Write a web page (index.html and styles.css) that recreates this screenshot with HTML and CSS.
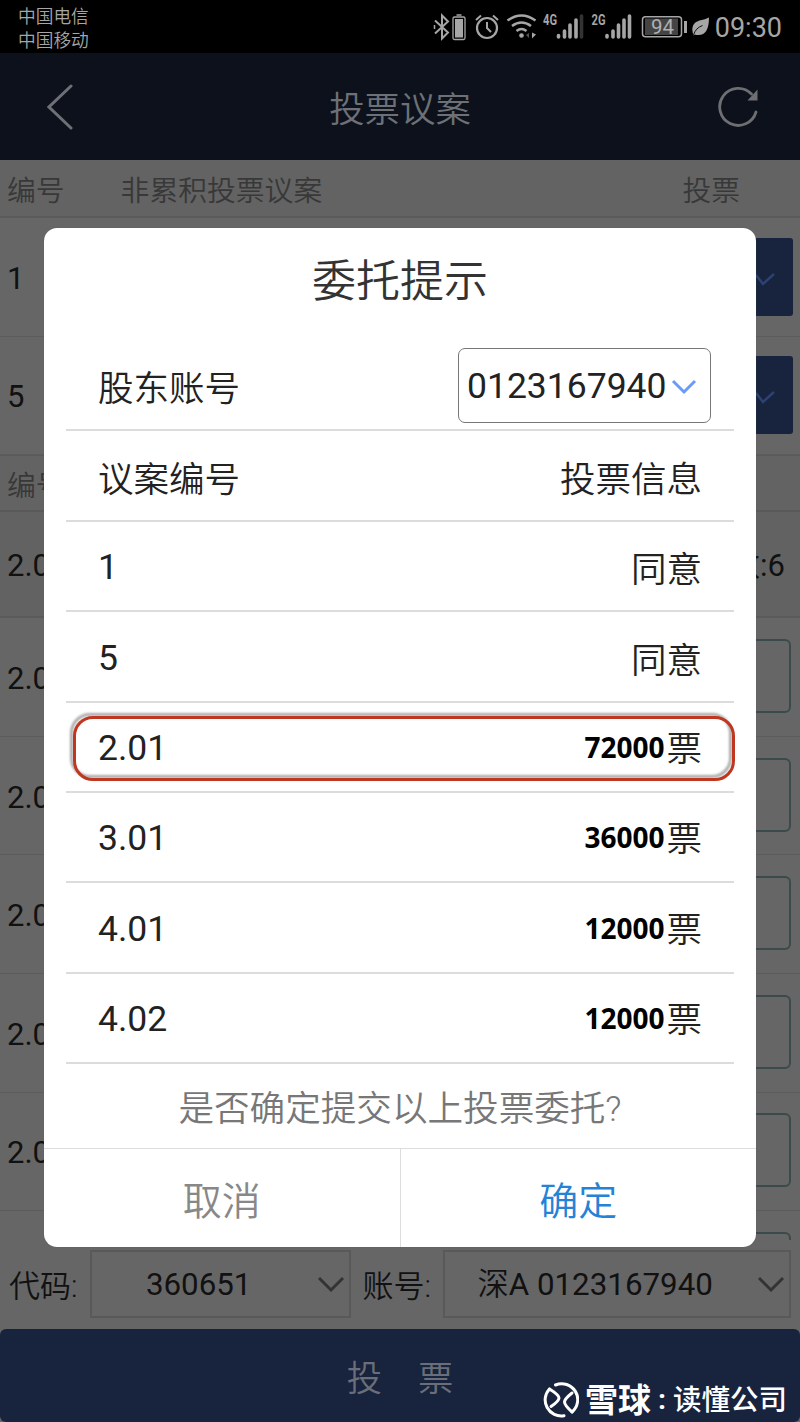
FILE: index.html
```html
<!DOCTYPE html>
<html lang="zh-CN">
<head>
  <meta charset="UTF-8">
  <meta name="viewport" content="width=device-width, initial-scale=1.0">
  <title>投票议案</title>
  <link rel="stylesheet" href="styles.css">
</head>
<body>
  <div class="page">
    <!-- status bar -->
    <div class="status-bar">
      <div class="carriers">
        <span>中国电信</span>
        <span>中国移动</span>
      </div>
      <svg class="status-icons" width="280" height="53" viewBox="0 0 280 53" fill="none" stroke="#a6a6a6" stroke-width="2">
        <!-- bluetooth + battery -->
        <path d="M16 20.500l13 12-6 6v-23l6 6-13 12"/>
        <path d="M15.500 25v4" stroke-width="1.500"/>
        <rect x="34" y="17" width="12" height="22.500" rx="1.500" stroke-width="1.300"/>
        <rect x="36" y="19" width="8" height="18.500" fill="#a6a6a6" stroke="none"/>
        <path d="M37.500 15h5" stroke-width="1.500"/>
        <!-- alarm -->
        <circle cx="68" cy="28" r="10" stroke-width="2.200"/>
        <path d="M68 22v6l4 4M57 20l5-4.500M79 20l-5-4.500" stroke-width="2"/>
        <!-- wifi -->
        <path d="M88.500 20.500q14-10 28 0M93 26q9.500-7 19 0M97.500 31q5-4 10 0" stroke-width="2.500"/>
        <circle cx="102.500" cy="35.500" r="2.300" fill="#a6a6a6" stroke="none"/>
        <path d="M110 33v5l-3-3z" fill="#555" stroke="none"/>
        <path d="M113 38.500v-6l4 2z" fill="#a6a6a6" stroke="none"/>
        <!-- mobile signals -->
        <text class="net" x="124" y="25" textLength="14" lengthAdjust="spacingAndGlyphs">4G</text>
        <g stroke-width="3.600" stroke-linecap="round">
          <path d="M139.500 35.500v1.500M145.500 31v6M151 25v12M157 20v17"/>
          <path d="M162.500 16v21" stroke="#333"/>
        </g>
        <text class="net" x="172.500" y="25" textLength="14" lengthAdjust="spacingAndGlyphs">2G</text>
        <path d="M188 35.500v1.500M194 31v6M199.500 25v12M205 20v17M210.500 16v21" stroke-width="3.600" stroke-linecap="round"/>
        <!-- battery level -->
        <rect x="223.500" y="16.800" width="39" height="20" rx="3" stroke-width="1.500"/>
        <rect x="226" y="18.500" width="33" height="16.500" fill="#444" stroke="none"/>
        <path d="M266.500 21v12" stroke-width="3"/>
        <text class="level" x="232" y="34" textLength="23">94</text>
        <!-- leaf -->
        <path d="M290 17.500q0 18-11 17.500-2 0-3-.5l-1.500 1q-4-12 6-15 6-1 9.500-3z" fill="#a6a6a6" stroke="none"/>
        <path d="M274.500 35q2-7 9-9.500" stroke="#000" stroke-width=".9"/>
      </svg>
      <span class="clock">09:30</span>
    </div>

    <div class="nav">
      <svg width="28" height="46" viewBox="0 0 28 46" fill="none" stroke="#6d7075" stroke-width="3" stroke-linecap="round">
        <path d="M24 2L2 23l22 21"/>
      </svg>
      <h1>投票议案</h1>
      <svg width="42" height="42" viewBox="0 0 42 42" fill="none" stroke="#6d6f72" stroke-width="2.800">
        <path d="M38 26a18.500 18.500 0 1 1-4.500-18" stroke-linecap="round"/>
        <path d="M39.500 3.500v11H29.500z" fill="#6d6f72" stroke="none"/>
      </svg>
    </div>

    <!-- proposals -->
    <div class="list">
      <div class="thead"><span class="col-no">编号</span><span class="col-name">非累积投票议案</span><span class="col-vote">投票</span></div>
      <div class="item">1<span class="choice"><svg width="20" height="14" viewBox="0 0 20 14"><path d="M1 2l7 9L19 1"/></svg></span></div>
      <div class="item">5<span class="choice"><svg width="20" height="14" viewBox="0 0 20 14"><path d="M1 2l7 9L19 1"/></svg></span></div>
      <div class="thead second"><span class="col-no">编号</span></div>
      <div class="group"><span>2.00</span><span>票数:6</span></div>
      <div class="item">2.01<span class="count"></span></div>
      <div class="item">2.02<span class="count"></span></div>
      <div class="item">2.03<span class="count"></span></div>
      <div class="item">2.04<span class="count"></span></div>
      <div class="item">2.05<span class="count"></span></div>
      <div class="item"><span class="count"></span></div>
    </div>

    <div class="account-bar">
      <span class="label">代码:</span>
      <div class="select code"><span class="num">360651</span><svg width="26" height="18" viewBox="0 0 26 18"><path d="M1 2l12 12L25 2"/></svg></div>
      <span class="label">账号:</span>
      <div class="select account"><span>深<span class="num">A 0123167940</span></span><svg width="26" height="18" viewBox="0 0 26 18"><path d="M1 2l12 12L25 2"/></svg></div>
    </div>
    <div class="vote-btn"><span>投</span><span>票</span></div>

    <!-- dialog -->
    <div class="dialog">
      <h2>委托提示</h2>
      <div class="rows">
        <div class="row first">
          <span class="cn">股东账号</span>
          <div class="holder num">0123167940<svg width="26" height="16" viewBox="0 0 26 16"><path d="M2 2l11 11L24 2"/></svg></div>
        </div>
        <div class="row"><span class="cn">议案编号</span><span class="cn">投票信息</span></div>
        <div class="row"><span class="num">1</span><span class="cn">同意</span></div>
        <div class="row"><span class="num">5</span><span class="cn">同意</span></div>
        <div class="row marked"><span class="num">2.01</span><span class="votes"><b>72000</b>票</span></div>
        <div class="row"><span class="num">3.01</span><span class="votes"><b>36000</b>票</span></div>
        <div class="row"><span class="num">4.01</span><span class="votes"><b>12000</b>票</span></div>
        <div class="row"><span class="num">4.02</span><span class="votes"><b>12000</b>票</span></div>
      </div>
      <p class="question">是否确定提交以上投票委托?</p>
      <div class="actions">
        <div class="cancel">取消</div>
        <div class="ok">确定</div>
      </div>
    </div>

    <!-- watermark -->
    <div class="watermark">
      <svg width="36" height="36" viewBox="0 0 36 36" fill="none" stroke="#fff" stroke-width="3" stroke-linecap="round">
        <path d="M12.500 3a16 16 0 0 1 16.500 27M21 33.700A16 16 0 0 1 6.500 7"/>
        <path d="M6.500 7q9.500 6 9.500 9T8 24.500M29 11q-7.500 6-7.500 9t7.500 10"/>
      </svg>
      <span class="brand">雪球</span><span class="colon">:</span><span class="author">读懂公司</span>
    </div>
  </div>
</body>
</html>
```
FILE: styles.css
```css
* {
  box-sizing: border-box;
}

body {
  margin: 0;
  font-family: Roboto, "Noto Sans CJK SC", sans-serif;
  line-height: 1;
  color: #111;
}

.page {
  position: relative;
  width: 800px;
  height: 1422px;
  overflow: hidden;
  background: #666;
  display: flex;
  flex-direction: column;
}

/* status bar */
.status-bar {
  flex: none;
  height: 53px;
  background: #000;
  color: #a6a6a6;
  display: flex;
  align-items: center;
  padding: 0 18px;
}

.carriers {
  display: flex;
  flex-direction: column;
  gap: 6px;
  width: 402px;
  padding-top: 7px;
  font-size: 17.700px;
  font-weight: 350;
}

.status-icons {
  overflow: visible;
  margin-left: 1px;
}

.net {
  font: 700 15px Roboto, sans-serif;
  fill: #a6a6a6;
  stroke: none;
}

.level {
  font: 20.500px Roboto, sans-serif;
  fill: #b0b0b0;
  stroke: none;
}

.clock {
  margin-left: 16px;
  font-size: 27px;
  padding-top: 4px;
}

/* title bar */
.nav {
  flex: none;
  height: 107px;
  background: #0c111c;
  display: flex;
  align-items: center;
  justify-content: space-between;
  padding: 0 40px 0 47px;
}

.nav h1 {
  margin: 0;
  padding: 8px 0 0 7px;
  font-size: 35.400px;
  font-weight: 350;
  color: #6d7075;
}

/* list */
.list {
  flex: none;
  height: 1080px;
  overflow: hidden;
}

.thead {
  height: 58px;
  display: flex;
  align-items: center;
  padding: 7px 60px 0 7px;
  background: #636363;
  border: 1px solid #5a5a5a;
  border-width: 0 0 2px;
  font-size: 28.800px;
  font-weight: 350;
  color: #383838;
}

.second {
  height: 57px;
  border-top-width: 1px;
}

.col-name {
  margin-left: 56px;
}

.col-vote {
  margin-left: auto;
}

.item {
  height: 118.600px;
  display: flex;
  align-items: center;
  justify-content: space-between;
  padding: 3px 7px 0;
  border-bottom: 1px solid #5c5c5c;
  font-size: 31px;
}

.choice {
  width: 150px;
  height: 78px;
  margin-top: -3px;
  border-radius: 3px;
  background: #18233d;
  display: flex;
  align-items: center;
  justify-content: flex-end;
  padding: 6px 18px 0 0;
}

.choice path {
  fill: none;
  stroke: #2c4273;
  stroke-width: 2.500;
}

.group {
  height: 106px;
  display: flex;
  align-items: center;
  justify-content: space-between;
  padding: 2px 15px 0 7px;
  background: #626262;
  border-bottom: 2px solid #5a5a5a;
  font-size: 31px;
}

.count {
  width: 150px;
  height: 74px;
  margin: -5px 2px 0 auto;
  border: 2px solid #3b4b4c;
  border-radius: 6px;
}

/* bottom */
.account-bar {
  flex: none;
  height: 89px;
  display: flex;
  align-items: center;
  padding: 0 9px 2px;
  font-size: 31.300px;
}

.label {
  width: 81px;
  padding-top: 5px;
  font-size: 31px;
  font-weight: 350;
}

.select {
  height: 68px;
  border: 2px solid #595959;
  display: flex;
  align-items: center;
  justify-content: space-between;
  padding: 3px 5px 0 0;
  font-weight: 350;
}

.num {
  font-weight: 400;
}

.select.code {
  width: 261px;
  padding-left: 54px;
  margin-right: 12px;
}

.select.account {
  width: 348px;
  padding-left: 32px;
}

.select path {
  fill: none;
  stroke: #333;
  stroke-width: 3;
}

.vote-btn {
  height: 93px;
  border-radius: 6px;
  background: #18233d;
  color: #696e78;
  display: flex;
  justify-content: center;
  align-items: center;
  gap: 36px;
  font-size: 35.300px;
  font-weight: 350;
  padding-top: 9px;
}

/* dialog */
.dialog {
  position: absolute;
  left: 44px;
  top: 228px;
  width: 712px;
  height: 1019px;
  border-radius: 13px;
  background: #fff;
  box-shadow: 0 0 1px #505050;
  color: #222;
}

.dialog h2 {
  margin: 0;
  height: 113px;
  line-height: 108px;
  text-align: center;
  font-size: 44px;
  font-weight: 350;
  color: #333;
}

.rows {
  padding: 0 22px;
}

.row {
  position: relative;
  height: 90.400px;
  display: flex;
  align-items: center;
  justify-content: space-between;
  padding: 4px 32px 0;
  border-bottom: 2px solid #dcdcdc;
  font-size: 35.500px;
  font-weight: 350;
}

.row.first {
  padding-right: 23px;
}

.cn {
  padding-top: 6px;
}

.votes {
  padding-top: 2px;
}

.row b {
  font: 700 28px/1 "Open Sans", sans-serif;
  color: #000;
  margin-right: 2px;
  vertical-align: 3px;
}

.holder {
  width: 253px;
  height: 75px;
  border: 1.500px solid #777;
  border-radius: 7px;
  display: flex;
  align-items: center;
  padding: 4px 0 0 8px;
  margin-top: -4px;
}

.holder svg {
  margin-left: 4px;
}

.holder path {
  fill: none;
  stroke: #6a9bf5;
  stroke-width: 3;
}

/* red ring round the highlighted row */
.marked::after {
  content: "";
  box-sizing: border-box;
  position: absolute;
  left: 7px;
  top: 13px;
  width: 662px;
  height: 65px;
  border: 3px solid #bf3720;
  border-radius: 20px;
  filter: drop-shadow(-3px -3px 1px #aaa);
}

.question {
  margin: 0;
  height: 84px;
  line-height: 90px;
  text-align: center;
  font-size: 35.600px;
  font-weight: 350;
  color: #777;
}

.actions {
  display: flex;
  height: 99px;
  border-top: 1px solid #ddd;
  font-size: 39px;
  font-weight: 350;
  text-align: center;
  line-height: 106px;
}

.cancel {
  flex: 1;
  color: #888;
  border-right: 1px solid #ddd;
}

.ok {
  flex: 1;
  color: #2483d6;
}

/* watermark */
.watermark {
  position: absolute;
  right: 13px;
  bottom: 4px;
  display: flex;
  align-items: center;
  color: #fff;
  font-size: 28.500px;
  font-weight: 500;
}

.brand {
  margin-left: 6px;
  font-size: 33px;
  font-weight: 700;
}

.colon {
  width: 22px;
  text-align: center;
  font-weight: 700;
}

.author {
  padding-top: 2px;
}
```
